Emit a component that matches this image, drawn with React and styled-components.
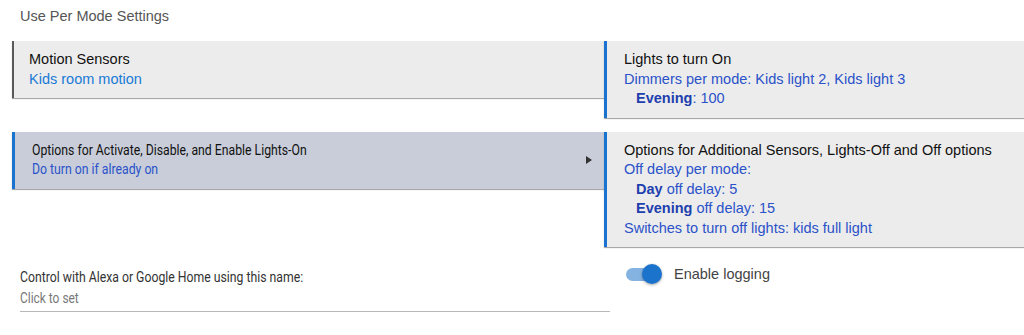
import React from 'react';
import styled, { createGlobalStyle } from 'styled-components';

const GlobalStyle = createGlobalStyle`
	html, body {
		margin: 0;
		padding: 0;
		background: #fff;
		overflow: hidden;
	}
	body {
		font-family: 'Liberation Sans', Arial, sans-serif;
		font-size: 14px;
	}
`;

const Page = styled.div`
	width: 1024px;
	height: 335px;
	overflow: hidden;
`;

const Title = styled.div`
	padding: 7px 20px 0;
	height: 34px;
	line-height: 19px;
	color: #555;
	font-size: 14.5px;
`;

const Grid = styled.div`
	display: grid;
	grid-template-columns: 592px 440px;
	row-gap: 14px;
	margin-left: 12px;
	align-items: start;
`;

const Card = styled.div`
	position: relative;
	background: ${({ selected }) => (selected ? '#c8cdd9' : '#ececec')};
	border-left: ${({ accent }) => (accent ? '3px solid #1a73cf' : '2px solid #5a5a5a')};
	padding: 9px 16px 9px ${({ accent }) => (accent ? '17px' : '15px')};
	box-shadow: 0 1px 1px rgba(0, 0, 0, 0.25), 0 1px 0 rgba(0, 0, 0, 0.12);
	line-height: 19.5px;
	font-size: 14.5px;
`;

/* the selected card renders in a narrower face */
const Narrow = styled.div`
	font-family: Roboto, 'Liberation Sans', sans-serif;
	font-size: 15.5px;
	transform: scaleX(0.79);
	transform-origin: left center;
	white-space: nowrap;
`;

const CardTitle = styled.div`
	color: #111;
`;

const Value = styled.div`
	color: ${({ light }) => (light ? '#1a7ad6' : '#2a52c9')};
	padding-left: ${({ indent }) => (indent ? '12px' : '0')};

	b {
		color: #1e3fae;
	}
`;

const Arrow = styled.span`
	position: absolute;
	right: 12px;
	top: 50%;
	transform: translateY(-50%);
	width: 0;
	height: 0;
	border-top: 4px solid transparent;
	border-bottom: 4px solid transparent;
	border-left: 6px solid #333;
`;

const Bottom = styled.div`
	display: grid;
	grid-template-columns: 604px 420px;
	margin-top: 20px;
`;

const Field = styled.div`
	margin-left: 20px;
	margin-right: -6px;
	border-bottom: 1px solid #b8b8b8;
	padding-bottom: 2px;
`;

const FieldLabel = styled(Narrow)`
	color: #333;
	line-height: 20px;
`;

const FieldValue = styled(Narrow)`
	color: #777;
	line-height: 22px;
	transform: scaleX(0.77);
`;

const ToggleRow = styled.label`
	display: flex;
	align-items: center;
	gap: 18px;
	padding-left: 22px;
	margin-top: -5px;
	height: 24px;
	color: #444;
	font-family: 'Liberation Sans', Arial, sans-serif;
	font-size: 14.5px;
`;

const Track = styled.span`
	position: relative;
	width: 30px;
	height: 13px;
	border-radius: 7px;
	background: #84b3e2;
`;

const Knob = styled.span`
	position: absolute;
	top: 50%;
	right: -6px;
	transform: translateY(-50%);
	width: 20px;
	height: 20px;
	border-radius: 50%;
	background: #1b73cc;
	box-shadow: 0 1px 3px rgba(0, 0, 0, 0.35);
`;

const App = () => {
	return (
		<Page>
			<GlobalStyle />
			<Title>Use Per Mode Settings</Title>

			<Grid>
				<Card>
					<CardTitle>Motion Sensors</CardTitle>
					<Value light>Kids room motion</Value>
				</Card>

				<Card accent>
					<CardTitle>Lights to turn On</CardTitle>
					<Value>Dimmers per mode: Kids light 2, Kids light 3</Value>
					<Value indent>
						<b>Evening</b>: 100
					</Value>
				</Card>

				<Card accent selected>
					<Narrow>
						<CardTitle>Options for Activate, Disable, and Enable Lights-On</CardTitle>
						<Value>Do turn on if already on</Value>
					</Narrow>
					<Arrow />
				</Card>

				<Card accent>
					<CardTitle>Options for Additional Sensors, Lights-Off and Off options</CardTitle>
					<Value>Off delay per mode:</Value>
					<Value indent>
						<b>Day</b> off delay: 5
					</Value>
					<Value indent>
						<b>Evening</b> off delay: 15
					</Value>
					<Value>Switches to turn off lights: kids full light</Value>
				</Card>
			</Grid>

			<Bottom>
				<Field>
					<FieldLabel>Control with Alexa or Google Home using this name:</FieldLabel>
					<FieldValue>Click to set</FieldValue>
				</Field>

				<ToggleRow>
					<Track>
						<Knob />
					</Track>
					Enable logging
				</ToggleRow>
			</Bottom>
		</Page>
	);
};

export default App;
